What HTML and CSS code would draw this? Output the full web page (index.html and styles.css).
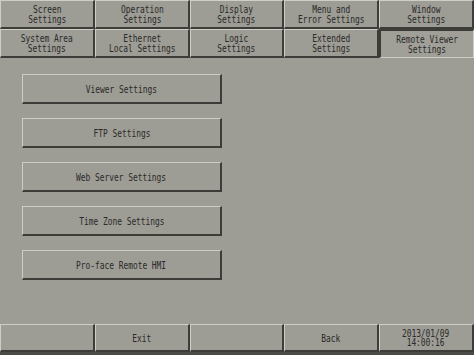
FILE: index.html
```html
<!DOCTYPE html>
<html lang="en">

<head>
    <meta charset="UTF-8">
    <meta name="viewport" content="width=device-width, initial-scale=1.0">
    <title>Remote Viewer Settings</title>
    <link rel="stylesheet" href="styles.css">
</head>

<body>
    <nav class="tabs">
        <div class="key"><span>Screen<br>Settings</span></div>
        <div class="key"><span>Operation<br>Settings</span></div>
        <div class="key"><span>Display<br>Settings</span></div>
        <div class="key"><span>Menu and<br>Error Settings</span></div>
        <div class="key"><span>Window<br>Settings</span></div>
        <div class="key"><span>System Area<br>Settings</span></div>
        <div class="key"><span>Ethernet<br>Local Settings</span></div>
        <div class="key"><span>Logic<br>Settings</span></div>
        <div class="key"><span>Extended<br>Settings</span></div>
        <div class="key active"><span>Remote Viewer<br>Settings</span></div>
    </nav>

    <main class="content">
        <div class="key item"><span>Viewer Settings</span></div>
        <div class="key item"><span>FTP Settings</span></div>
        <div class="key item"><span>Web Server Settings</span></div>
        <div class="key item"><span>Time Zone Settings</span></div>
        <div class="key item"><span>Pro-face Remote HMI</span></div>
    </main>

    <footer class="bottom">
        <div class="key"></div>
        <div class="key"><span>Exit</span></div>
        <div class="key"></div>
        <div class="key"><span>Back</span></div>
        <div class="key clock"><span>2013/01/09<br>14:00:16</span></div>
    </footer>
</body>

</html>
```

FILE: styles.css
```css
body {
    margin: 0;
    padding: 0;
    width: 474px;
    height: 355px;
    background-color: #9d9c95;
    font-family: 'DejaVu Sans Mono', monospace;
    font-size: 10.5px;
    color: #2a2a28;
    display: flex;
    flex-direction: column;
    overflow: hidden;
}

.key {
    box-sizing: border-box;
    background-color: #9d9c95;
    border-top: 1px solid #cfcec6;
    border-left: 1px solid #cfcec6;
    border-bottom: 2px solid #3c3c38;
    border-right: 2px solid #3c3c38;
    display: flex;
    align-items: center;
    justify-content: center;
    text-align: center;
    line-height: 10px;
}

.key span {
    display: inline-block;
    transform: scaleX(0.75);
    white-space: nowrap;
}

.tabs {
    display: grid;
    grid-template-columns: 95px 95px 94px 95px 95px;
    grid-template-rows: 29px 29px;
}

.tabs .active {
    border-top: 2px solid #3c3c38;
    border-left: 2px solid #3c3c38;
    border-bottom: 1px solid #cfcec6;
    border-right: 1px solid #cfcec6;
    background-color: #a09f98;
}

.content {
    flex: 1;
    padding: 16px 0 0 22px;
    display: flex;
    flex-direction: column;
    gap: 14px;
}

.item {
    width: 200px;
    height: 30px;
}

.bottom {
    display: grid;
    grid-template-columns: 95px 95px 94px 95px 95px;
    height: 28px;
    border-bottom: 3px solid #4a4a46;
}

.clock {
    line-height: 9px;
}
```
